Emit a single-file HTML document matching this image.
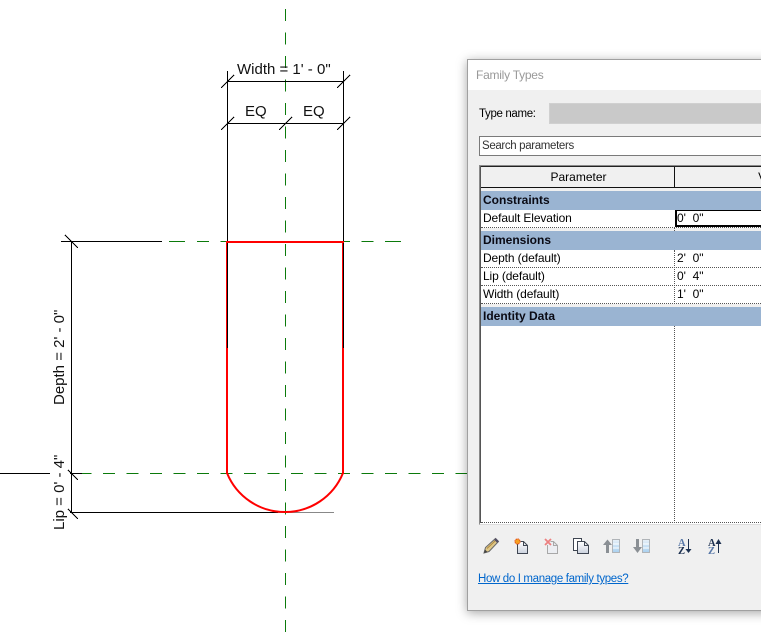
<!DOCTYPE html>
<html>
<head>
<meta charset="utf-8">
<style>
html,body{margin:0;padding:0;background:#fff;width:761px;height:635px;overflow:hidden}
body{position:relative;font-family:"Liberation Sans",sans-serif;font-size:12px;color:#000}
svg{position:absolute;left:0;top:0}
.abs{position:absolute;white-space:nowrap}
.band{position:absolute;left:481px;width:280px;height:19px;background:#9ab4d2;font-weight:bold;line-height:18px;padding-left:2px;box-sizing:border-box;color:#0a0a14}
.lab{position:absolute;left:483px;line-height:17px;white-space:nowrap;letter-spacing:-.12px}
.val{position:absolute;left:677px;line-height:17px;white-space:nowrap}
.dot{position:absolute;left:481px;width:280px;height:0;border-top:1px dotted #555}
</style>
</head>
<body>
<svg width="761" height="635" viewBox="0 0 761 635">
  <g shape-rendering="crispEdges" fill="none" stroke-width="1">
    <g stroke="#0b7a0b">
      <line x1="285.5" y1="9" x2="285.5" y2="633" stroke-dasharray="12 11.5"/>
      <line x1="169" y1="241.5" x2="185" y2="241.5"/>
      <line x1="197" y1="241.5" x2="397" y2="241.5" stroke-dasharray="12 11.5"/>
      <line x1="385" y1="241.5" x2="401" y2="241.5"/>
      <line x1="79.5" y1="473.5" x2="468" y2="473.5" stroke-dasharray="12 11.5"/>
    </g>
    <g stroke="#000">
      <line x1="227.5" y1="71" x2="227.5" y2="348"/>
      <line x1="343.5" y1="71" x2="343.5" y2="348"/>
      <line x1="227" y1="81.5" x2="344" y2="81.5"/>
      <line x1="227" y1="123.5" x2="344" y2="123.5"/>
      <line x1="221" y1="88" x2="234" y2="75"/>
      <line x1="337" y1="88" x2="350" y2="75"/>
      <line x1="221" y1="130" x2="234" y2="117"/>
      <line x1="279" y1="130" x2="292" y2="117"/>
      <line x1="337" y1="130" x2="350" y2="117"/>
      <line x1="61" y1="241.5" x2="162" y2="241.5"/>
      <line x1="71.5" y1="241" x2="71.5" y2="512"/>
      <line x1="65" y1="235" x2="78" y2="248"/>
      <line x1="0" y1="473.5" x2="50" y2="473.5"/>
      <line x1="70" y1="473.5" x2="82" y2="473.5"/>
      <line x1="68" y1="470" x2="78" y2="480"/>
      <line x1="68" y1="509" x2="78" y2="519"/>
      <line x1="70" y1="512.5" x2="278" y2="512.5"/>
    </g>
    <line x1="278" y1="512.5" x2="334" y2="512.5" stroke="#888"/>
    <rect x="226" y="241" width="118" height="2" fill="#f00" stroke="none"/>
    <rect x="226" y="348" width="2" height="126" fill="#f00" stroke="none"/>
    <rect x="342" y="348" width="2" height="126" fill="#f00" stroke="none"/>
    <rect x="226" y="243" width="1" height="105" fill="#f00" stroke="none"/>
    <rect x="342" y="243" width="1" height="105" fill="#f00" stroke="none"/>
  </g>
  <path d="M227 473 A62.6 62.6 0 0 0 343 473" fill="none" stroke="#f00" stroke-width="2"/>
  <g font-family="'Liberation Sans',sans-serif" font-size="15" fill="#111">
    <text x="237" y="74">Width = 1' - 0"</text>
    <text x="245" y="116">EQ</text>
    <text x="303" y="116">EQ</text>
    <text transform="translate(64 405) rotate(-90)">Depth = 2' - 0"</text>
    <text transform="translate(64 530) rotate(-90)">Lip = 0' - 4"</text>
  </g>
</svg>

<!-- dialog -->
<div class="abs" style="left:467px;top:59px;width:320px;height:552px;background:#f0f0f0;border:1px solid #a0a0a0;box-sizing:border-box;box-shadow:0 2px 10px rgba(0,0,0,.35)"></div>
<div class="abs" style="left:468px;top:60px;width:293px;height:30px;background:#fff"></div>
<div class="abs" style="left:476px;top:68px;color:#999;line-height:14px;letter-spacing:-.25px">Family Types</div>
<div class="abs" style="left:479px;top:107px;line-height:14px;font-size:11.5px;letter-spacing:-.35px">Type name:</div>
<div class="abs" style="left:549px;top:103px;width:230px;height:21px;background:#c9c9c9;border:1px solid #d0d0d0;box-sizing:border-box"></div>
<div class="abs" style="left:479px;top:136px;width:300px;height:20px;background:#fff;border:1px solid #7a7a7a;box-sizing:border-box"></div>
<div class="abs" style="left:482px;top:139px;line-height:14px;color:#333;font-size:11.5px;letter-spacing:-.35px">Search parameters</div>

<!-- table -->
<div class="abs" style="left:479px;top:165px;width:300px;height:360px;background:#fff;border:1px solid #8a8a8a;border-bottom:1px solid #ddd;box-sizing:border-box"></div>
<div class="abs" style="left:480px;top:166px;width:281px;height:1px;background:#222"></div>
<div class="abs" style="left:480px;top:166px;width:1px;height:357px;background:#555"></div>
<div class="abs" style="left:481px;top:167px;width:280px;height:20px;background:#f0f0f0"></div>
<div class="abs" style="left:481px;top:187px;width:280px;height:1px;background:#111"></div>
<div class="abs" style="left:674px;top:167px;width:1px;height:20px;background:#111"></div>
<div class="abs" style="left:482px;top:170px;width:193px;text-align:center;line-height:14px">Parameter</div>
<div class="abs" style="left:675px;top:170px;width:196px;text-align:center;line-height:14px">Value</div>
<div class="abs" style="left:481px;top:188px;width:280px;height:3px;background:#f0f0f0"></div>

<div class="band" style="top:191px">Constraints</div>
<div class="lab" style="top:210px">Default Elevation</div>
<div class="dot" style="top:227px"></div>
<div class="abs" style="left:481px;top:228px;width:280px;height:3px;background:#f0f0f0"></div>
<div class="band" style="top:231px">Dimensions</div>
<div class="lab" style="top:250px">Depth (default)</div>
<div class="dot" style="top:267px"></div>
<div class="lab" style="top:268px">Lip (default)</div>
<div class="dot" style="top:285px"></div>
<div class="lab" style="top:286px">Width (default)</div>
<div class="dot" style="top:303px"></div>
<div class="abs" style="left:481px;top:304px;width:280px;height:3px;background:#f0f0f0"></div>
<div class="band" style="top:307px">Identity Data</div>

<div class="abs" style="left:674px;top:228px;width:0;height:3px;border-left:1px dotted #555"></div>
<div class="abs" style="left:674px;top:250px;width:0;height:54px;border-left:1px dotted #555"></div>
<div class="abs" style="left:674px;top:326px;width:0;height:197px;border-left:1px dotted #555"></div>
<div class="abs" style="left:675px;top:210px;width:100px;height:17px;border:2px solid #000;border-top-width:1px;box-sizing:border-box;background:#fff"></div>
<div class="val" style="top:210px">0'&nbsp; 0"</div>
<div class="val" style="top:250px">2'&nbsp; 0"</div>
<div class="val" style="top:268px">0'&nbsp; 4"</div>
<div class="val" style="top:286px">1'&nbsp; 0"</div>
<div class="dot" style="top:522px"></div>

<!-- toolbar icons -->
<svg width="761" height="635" viewBox="0 0 761 635">
  <defs>
    <linearGradient id="d" x1="0" y1="0" x2="0" y2="1"><stop offset="0" stop-color="#fff"/><stop offset="1" stop-color="#ccd2de"/></linearGradient>
    <linearGradient id="b" x1="0" y1="0" x2="0" y2="1"><stop offset="0" stop-color="#e8f0f8"/><stop offset="1" stop-color="#a8d0f0"/></linearGradient>
  </defs>
  <!-- pencil -->
  <path d="M484 553 L485.5 547.5 L495.5 538.5 L498.5 541.5 L489 551.5 Z" fill="#e0c888" stroke="#6a6a6a" stroke-width="1"/>
  <path d="M495 539 L498 542" stroke="#555066" stroke-width="2.4"/>
  <path d="M487 548.5 L495 541" stroke="#b08a40" stroke-width="1"/>
  <path d="M484 553 L485 549.5 L487.5 552 Z" fill="#444"/>
  <!-- new -->
  <path d="M520.5 541.5 H523.5 L527.5 545.5 V553.5 H517.5 V544" fill="url(#d)" stroke="#3f4652"/>
  <path d="M523.5 541.5 V545.5 H527.5" fill="none" stroke="#3f4652"/>
  <circle cx="517.5" cy="541.5" r="2.6" fill="#f6a020" stroke="#e04010" stroke-width="1" stroke-dasharray="1.2 .8"/>
  <!-- delete -->
  <path d="M550.5 541.5 H553.5 L557.5 545.5 V553.5 H547.5 V545" fill="#eceef2" stroke="#a8a8a8"/>
  <path d="M553.5 541.5 V545.5 H557.5" fill="none" stroke="#a8a8a8"/>
  <path d="M545 539 L551 545 M551 539 L545 545" stroke="#ec8080" stroke-width="1.8"/>
  <!-- copy -->
  <path d="M577 550.5 H573.5 V538.5 H581.5 V541" fill="#fff" stroke="#3f4652"/>
  <path d="M577.5 541.5 H584.5 L588.5 545.5 V553.5 H577.5 Z" fill="url(#d)" stroke="#3f4652"/>
  <path d="M584.5 541.5 V545.5 H588.5" fill="none" stroke="#3f4652"/>
  <!-- move up -->
  <path d="M606 553 V545 H603 L607.5 539.5 L612 545 H609 V553 Z" fill="#8a8f94"/>
  <rect x="612.5" y="539.5" width="7" height="13" fill="url(#b)" stroke="#b0b4b8"/>
  <path d="M613 544 H619 M613 548 H619" stroke="#fff"/>
  <!-- move down -->
  <path d="M636 539 V547 H633 L637.5 553 L642 547 H639 V539 Z" fill="#8a8f94"/>
  <rect x="642.5" y="539.5" width="7" height="13" fill="url(#b)" stroke="#b0b4b8"/>
  <path d="M643 544 H649 M643 548 H649" stroke="#fff"/>
  <!-- sort -->
  <g font-family="'Liberation Serif',serif" font-weight="bold" font-size="10.5">
    <text x="678" y="546" fill="#5878a8">A</text>
    <text x="678" y="554" fill="#1c3050">Z</text>
    <text x="708" y="546" fill="#1c3050">A</text>
    <text x="708" y="554" fill="#5878a8">Z</text>
  </g>
  <path d="M688.5 539 V550" stroke="#1c3050"/>
  <path d="M685.5 549 H691.5 L688.5 553 Z" fill="#1c3050"/>
  <path d="M718.5 543 V553" stroke="#1c3050"/>
  <path d="M715.5 544 H721.5 L718.5 539 Z" fill="#1c3050"/>
</svg>

<div class="abs" style="left:478px;top:572px;line-height:14px;color:#0066cc;text-decoration:underline;font-size:11.5px;letter-spacing:-.35px">How do I manage family types?</div>
</body>
</html>
